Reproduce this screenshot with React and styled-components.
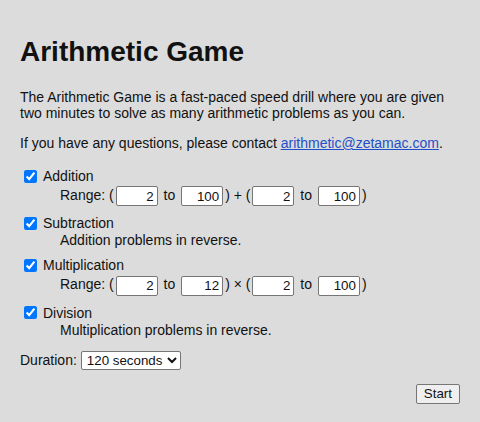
import React, { useState } from 'react';
import styled, { createGlobalStyle } from 'styled-components';

const GlobalStyle = createGlobalStyle`
  html, body {
    margin: 0;
    background: #dcdcdc;
  }
  body {
    font-family: "Liberation Sans", Arial, sans-serif;
    font-size: 14px;
    color: #111;
  }
`;

const Page = styled.div`
  padding: 17px 20px 20px;
`;

const Title = styled.h1`
  font-size: 28px;
  font-weight: bold;
  margin: 19px 0 21px;
`;

const Text = styled.p`
  margin: 14px 0;
  line-height: 16px;
`;

const Link = styled.a`
  color: #1f4fc8;
  text-decoration: underline;
`;

const Options = styled.div`
  display: flex;
  flex-direction: column;
  gap: 8px;
  margin: 16px 0 13px;
`;

const Label = styled.label`
  display: flex;
  align-items: center;
  height: 18px;
  cursor: pointer;
`;

const Check = styled.input`
  width: 13px;
  height: 13px;
  margin: 0 6px 0 4px;
  accent-color: #0075ff;
`;

const Detail = styled.div`
  margin-left: 40px;
  line-height: ${({ $range }) => ($range ? '20px' : '16px')};
  white-space: nowrap;
`;

const NumInput = styled.input`
  box-sizing: border-box;
  width: 42px;
  height: 20px;
  margin: 0 2px;
  padding: 1px 3px;
  border: 1px solid #767676;
  border-radius: 2px;
  background: #fff;
  font-family: inherit;
  font-size: 13.333px;
  text-align: right;
  vertical-align: middle;
  color: #111;
`;

const Row = styled.div`
  display: flex;
  align-items: center;
  gap: 4px;
  height: 19px;
  margin: 0 0 14px;
`;

const Select = styled.select`
  box-sizing: border-box;
  height: 19px;
  padding: 0 1px;
  border: 1px solid #767676;
  border-radius: 2px;
  background: #fff;
  font-family: inherit;
  font-size: 13.333px;
  color: #111;
`;

const Footer = styled.div`
  display: flex;
  justify-content: flex-end;
`;

const Button = styled.button`
  box-sizing: border-box;
  height: 20px;
  padding: 1px 7px;
  border: 1px solid #767676;
  border-radius: 2px;
  background: #efefef;
  font-family: inherit;
  font-size: 13.333px;
  color: #111;
  cursor: pointer;
`;

const Range = ({ a, b, c, d, op }) => (
  <Detail $range>
    Range: (<NumInput defaultValue={a} />{' to '}<NumInput defaultValue={b} />
    {`) ${op} (`}
    <NumInput defaultValue={c} />{' to '}<NumInput defaultValue={d} />)
  </Detail>
);

const ops = [
  { name: 'Addition', range: [2, 100, 2, 100], op: '+' },
  { name: 'Subtraction', note: 'Addition problems in reverse.' },
  { name: 'Multiplication', range: [2, 12, 2, 100], op: '×' },
  { name: 'Division', note: 'Multiplication problems in reverse.' }
];

export default function App() {
  const [checked, setChecked] = useState(ops.map(() => true));

  const toggle = (i) => {
    setChecked(checked.map((v, j) => (j === i ? !v : v)));
  };

  return (
    <Page>
      <GlobalStyle />
      <Title>Arithmetic Game</Title>
      <Text>
        The Arithmetic Game is a fast-paced speed drill where you are given
        two minutes to solve as many arithmetic problems as you can.
      </Text>
      <Text>
        If you have any questions, please contact{' '}
        <Link href="#">arithmetic@zetamac.com</Link>.
      </Text>
      <Options>
        {ops.map((o, i) => (
          <div key={o.name}>
            <Label>
              <Check type="checkbox" checked={checked[i]} onChange={() => toggle(i)} />
              {o.name}
            </Label>
            {o.range ? (
              <Range a={o.range[0]} b={o.range[1]} c={o.range[2]} d={o.range[3]} op={o.op} />
            ) : (
              <Detail>{o.note}</Detail>
            )}
          </div>
        ))}
      </Options>
      <Row>
        Duration:
        <Select defaultValue="120">
          <option value="30">30 seconds</option>
          <option value="60">60 seconds</option>
          <option value="120">120 seconds</option>
          <option value="300">300 seconds</option>
          <option value="600">600 seconds</option>
        </Select>
      </Row>
      <Footer>
        <Button type="button">Start</Button>
      </Footer>
    </Page>
  );
}
